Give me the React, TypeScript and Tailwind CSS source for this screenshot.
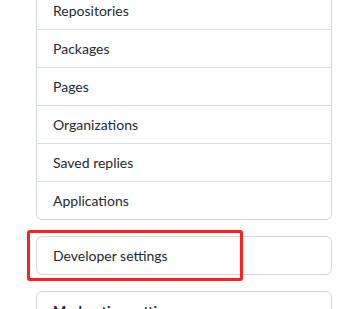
import React from "react";

const items = [
  "Repositories",
  "Packages",
  "Pages",
  "Organizations",
  "Saved replies",
  "Applications",
];

const App = () => {
  return (
    <div
      className="h-[309px] w-[344px] overflow-hidden bg-white text-[14px] text-[#24292f]"
      style={{ fontFamily: "Lato, 'Liberation Sans', sans-serif" }}
    >
      <div className="-mt-[9px] ml-[36px] w-[296px]">
        <nav className="rounded-md border border-[#d0d7de]">
          {items.map((item, i) => (
            <div
              key={item}
              className={`px-4 py-2 leading-[21px] ${
                i > 0 ? "border-t border-[#d8dee4]" : ""
              }`}
            >
              {item}
            </div>
          ))}
        </nav>

        <div className="relative mt-4">
          <div className="rounded-md border border-[#d0d7de] px-4 py-2 leading-[21px]">
            Developer settings
          </div>
          <div className="pointer-events-none absolute -left-[9px] -top-[6px] h-[51px] w-[216px] rounded-[3px] border-[3px] border-[#ff1f1f]" />
        </div>

        <div className="mt-4 rounded-md border border-[#d0d7de] px-4 pt-2 pb-2 font-bold leading-[21px]">
          Moderation settings
        </div>
      </div>
    </div>
  );
};

export default App;
